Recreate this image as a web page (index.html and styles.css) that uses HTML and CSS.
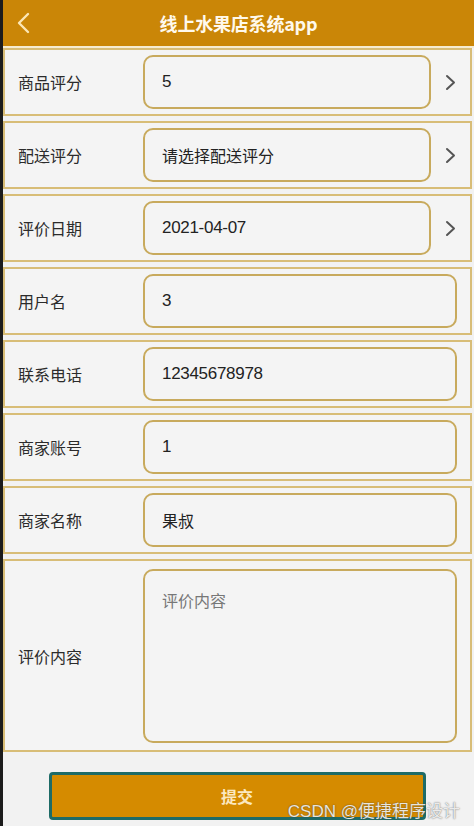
FILE: index.html
```html
<!DOCTYPE html>
<html lang="zh">
<head>
<meta charset="utf-8">
<title>线上水果店系统app</title>
<link rel="stylesheet" href="styles.css">
</head>
<body>
<div class="app">
  <header class="topbar">
    <span class="back">
      <svg width="14" height="22" viewBox="0 0 14 22"><polyline points="12,2 3,11 12,20" fill="none" stroke="#fbe6b6" stroke-width="2.4" stroke-linecap="round" stroke-linejoin="round"/></svg>
    </span>
    <h1 class="title">线上水果店系统app</h1>
    <span></span>
  </header>

  <main class="form">
    <div class="row has-arrow">
      <span class="label">商品评分</span>
      <div class="field">5</div>
      <span class="arrow"><svg width="12" height="17" viewBox="0 0 12 17"><polyline points="2,2 9,8.5 2,15" fill="none" stroke="#555" stroke-width="2" stroke-linecap="round" stroke-linejoin="round"/></svg></span>
    </div>
    <div class="row has-arrow">
      <span class="label">配送评分</span>
      <div class="field cjk">请选择配送评分</div>
      <span class="arrow"><svg width="12" height="17" viewBox="0 0 12 17"><polyline points="2,2 9,8.5 2,15" fill="none" stroke="#555" stroke-width="2" stroke-linecap="round" stroke-linejoin="round"/></svg></span>
    </div>
    <div class="row has-arrow">
      <span class="label">评价日期</span>
      <div class="field">2021-04-07</div>
      <span class="arrow"><svg width="12" height="17" viewBox="0 0 12 17"><polyline points="2,2 9,8.5 2,15" fill="none" stroke="#555" stroke-width="2" stroke-linecap="round" stroke-linejoin="round"/></svg></span>
    </div>
    <div class="row">
      <span class="label">用户名</span>
      <div class="field">3</div>
    </div>
    <div class="row">
      <span class="label">联系电话</span>
      <div class="field">12345678978</div>
    </div>
    <div class="row">
      <span class="label">商家账号</span>
      <div class="field">1</div>
    </div>
    <div class="row">
      <span class="label">商家名称</span>
      <div class="field cjk">果叔</div>
    </div>
    <div class="row tall">
      <span class="label">评价内容</span>
      <div class="field area"><span class="placeholder">评价内容</span></div>
    </div>

    <div class="actions">
      <button class="submit" type="button">提交</button>
    </div>
  </main>

  <div class="watermark">CSDN @便捷程序设计</div>
</div>
</body>
</html>
```

FILE: styles.css
```css
* { box-sizing: border-box; }

html, body {
  margin: 0;
  padding: 0;
  background: #f2f2f2;
}

body {
  font-family: "Noto Sans CJK SC", "Liberation Sans", sans-serif;
}

.app {
  position: relative;
  width: 474px;
  height: 826px;
  border-left: 3px solid #1c1c1c;
  background: #f2f2f2;
  overflow: hidden;
}

.topbar {
  height: 46px;
  background: #ca8607;
  display: grid;
  grid-template-columns: 60px 1fr 60px;
  align-items: center;
  border-bottom: 2px solid #f6ecd2;
  box-sizing: content-box;
}

.back {
  display: flex;
  align-items: center;
  padding-left: 13px;
  height: 22px;
}

.title {
  margin: 0;
  text-align: center;
  color: #fff9ec;
  font-size: 18px;
  font-weight: 700;
  line-height: 46px;
  letter-spacing: -0.2px;
}

.form {
  display: flex;
  flex-direction: column;
  gap: 5px;
}

.row {
  display: grid;
  grid-template-columns: 125px 1fr;
  align-items: center;
  height: 68px;
  margin-right: 2px;
  padding: 0 13px 0 13px;
  border: 2px solid #d8bd77;
  background: #f4f4f4;
}

.row.has-arrow {
  grid-template-columns: 125px 1fr 39px;
  padding-right: 0;
}

.row.tall {
  height: 193px;
}

.label {
  font-size: 16px;
  color: #2b2b2b;
  font-weight: 400;
}

.field {
  height: 54px;
  border: 2px solid #c8aa5d;
  border-radius: 10px;
  background: #f4f4f4;
  padding-left: 17px;
  display: flex;
  align-items: center;
  font-family: "Liberation Sans", "Noto Sans CJK SC", sans-serif;
  font-size: 17px;
  color: #222;
  letter-spacing: -0.3px;
}

.field.cjk {
  font-family: "Noto Sans CJK SC", "Liberation Sans", sans-serif;
  font-size: 16px;
  letter-spacing: 0;
}

.field.area {
  height: 174px;
  align-items: flex-start;
  padding-top: 17px;
}

.placeholder {
  font-family: "Noto Sans CJK SC", sans-serif;
  font-size: 16px;
  color: #777;
  letter-spacing: 0;
}

.arrow {
  display: flex;
  justify-content: center;
  align-items: center;
}

.actions {
  display: flex;
  justify-content: center;
  padding-top: 15px;
  margin-left: -3px;
}

.submit {
  width: 377px;
  height: 48px;
  border: 3px solid #1e6b67;
  border-radius: 4px;
  background: #d58b00;
  color: #fbe8c0;
  font-family: "Noto Sans CJK SC", sans-serif;
  font-size: 16px;
  font-weight: 700;
  padding: 0;
}

.watermark {
  position: absolute;
  right: 14px;
  bottom: 4px;
  font-family: "Liberation Sans", "Noto Sans CJK SC", sans-serif;
  font-size: 17px;
  color: rgba(255, 255, 255, 0.85);
  text-shadow: 0 0 1px rgba(60, 60, 60, 0.6), 0 0 2px rgba(60, 60, 60, 0.4);
}
```
